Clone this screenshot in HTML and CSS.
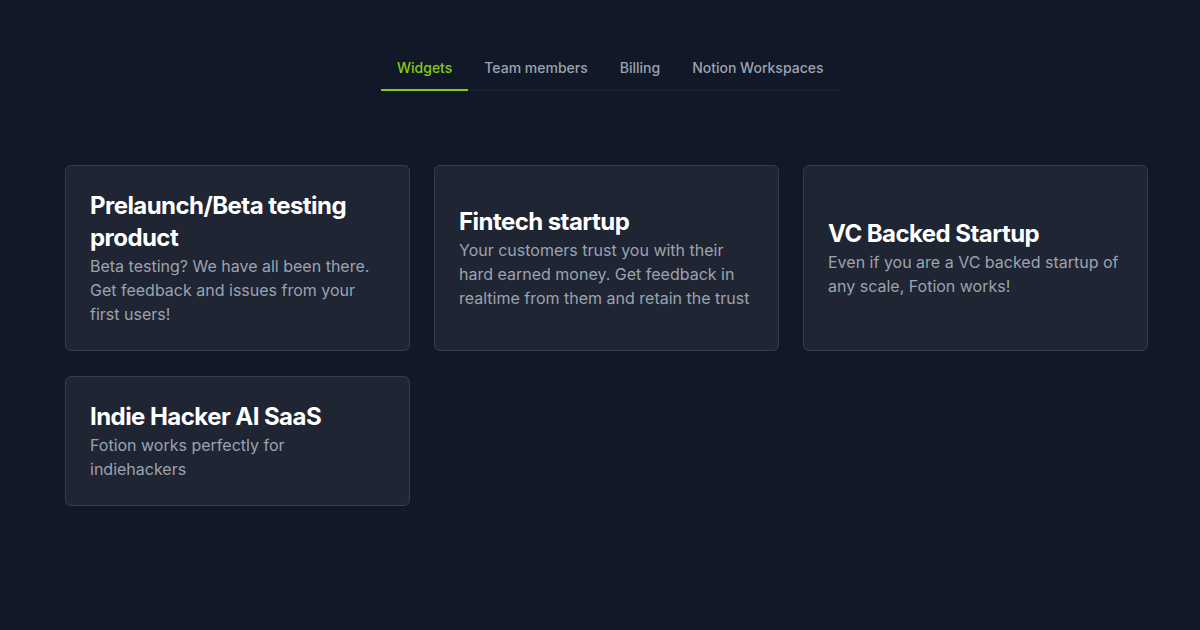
FILE: index.html
```html
<!DOCTYPE html>
<html lang="en">
<head>
<meta charset="utf-8">
<title>Widgets</title>
<link rel="stylesheet" href="styles.css">
</head>
<body>
  <div class="page">
    <nav class="tabs">
      <a class="tab active">Widgets</a>
      <a class="tab">Team members</a>
      <a class="tab">Billing</a>
      <a class="tab">Notion Workspaces</a>
    </nav>
    <div class="grid">
      <div class="card">
        <h2>Prelaunch/Beta testing product</h2>
        <p>Beta testing? We have all been there. Get feedback and issues from your first users!</p>
      </div>
      <div class="card">
        <h2>Fintech startup</h2>
        <p>Your customers trust you with their hard earned money. Get feedback in realtime from them and retain the trust</p>
      </div>
      <div class="card">
        <h2>VC Backed Startup</h2>
        <p>Even if you are a VC backed startup of any scale, Fotion works!</p>
      </div>
      <div class="card">
        <h2>Indie Hacker AI SaaS</h2>
        <p>Fotion works perfectly for indiehackers</p>
      </div>
    </div>
  </div>
</body>
</html>
```

FILE: styles.css
```css
* { box-sizing: border-box; }
html, body {
  margin: 0;
  padding: 0;
  background: #111827;
  height: 100%;
}
body {
  font-family: Inter, "Noto Sans", sans-serif;
  color: #9ca3af;
  -webkit-font-smoothing: antialiased;
}
.page {
  padding-top: 46px;
}
.tabs {
  display: flex;
  width: 459px;
  margin-left: 381px;
  border-bottom: 1px solid #1c2230;
}
.tab {
  display: block;
  padding: 12px 16px 11px;
  font-size: 14px;
  line-height: 20px;
  font-weight: 500;
  color: #9ca3af;
  border-bottom: 2px solid transparent;
  margin-bottom: -1px;
}
.tab.active {
  color: #84cc16;
  border-bottom-color: #84cc16;
}
.grid {
  margin: 74px 0 0 65px;
  width: 1083px;
  display: grid;
  grid-template-columns: repeat(3, 1fr);
  gap: 25px 24px;
}
.card {
  background: #1f2533;
  border: 1px solid #343b49;
  border-radius: 6px;
  padding: 24px;
  display: flex;
  flex-direction: column;
  justify-content: center;
}
.card h2 {
  margin: 0;
  font-size: 24px;
  line-height: 32px;
  font-weight: 700;
  color: #ffffff;
  letter-spacing: -0.55px;
}
.card p {
  margin: 0;
  font-size: 16px;
  line-height: 24px;
  color: #9ca3af;
}
```
